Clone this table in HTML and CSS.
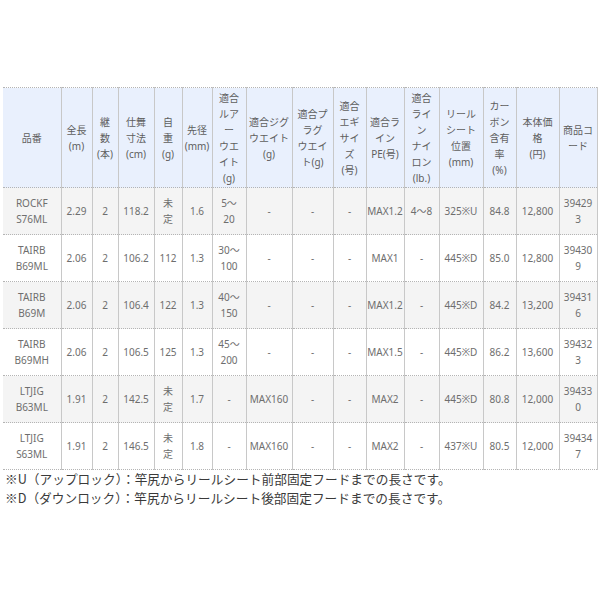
FILE: index.html
```html
<!DOCTYPE html>
<html lang="ja">
<head>
<meta charset="utf-8">
<title>Spec table</title>
<link rel="stylesheet" href="styles.css">
</head>
<body>
<div class="page">
  <table class="spec">
    <colgroup>
      <col class="c58"><col class="c31"><col class="c26"><col class="c36"><col class="c28"><col class="c30"><col class="c34"><col class="c46"><col class="c41"><col class="c33"><col class="c38"><col class="c35"><col class="c44"><col class="c33"><col class="c43"><col class="c38">
    </colgroup>
    <thead>
      <tr>
        <th>品番</th>
        <th>全長<br>(m)</th>
        <th>継<br>数<br>(本)</th>
        <th>仕舞<br>寸法<br>(cm)</th>
        <th>自<br>重<br>(g)</th>
        <th>先径<br>(mm)</th>
        <th>適合<br>ルア<br>ー<br>ウエ<br>イト<br>(g)</th>
        <th>適合ジグ<br>ウエイト<br>(g)</th>
        <th>適合プ<br>ラグ<br>ウエイ<br>ト(g)</th>
        <th>適合<br>エギ<br>サイ<br>ズ<br>(号)</th>
        <th>適合ラ<br>イン<br>PE(号)</th>
        <th>適合<br>ライ<br>ン<br>ナイ<br>ロン<br>(lb.)</th>
        <th>リール<br>シート<br>位置<br>(mm)</th>
        <th>カー<br>ボン<br>含有<br>率<br>(%)</th>
        <th>本体価<br>格<br>(円)</th>
        <th>商品コ<br>ード</th>
      </tr>
    </thead>
    <tbody>
      <tr>
        <td>ROCKF<br>S76ML</td><td>2.29</td><td>2</td><td>118.2</td><td>未<br>定</td><td>1.6</td><td>5～<br>20</td><td>-</td><td>-</td><td>-</td><td>MAX1.2</td><td>4～8</td><td>325※U</td><td>84.8</td><td>12,800</td><td>39429<br>3</td>
      </tr>
      <tr>
        <td>TAIRB<br>B69ML</td><td>2.06</td><td>2</td><td>106.2</td><td>112</td><td>1.3</td><td>30～<br>100</td><td>-</td><td>-</td><td>-</td><td>MAX1</td><td>-</td><td>445※D</td><td>85.0</td><td>12,800</td><td>39430<br>9</td>
      </tr>
      <tr>
        <td>TAIRB<br>B69M</td><td>2.06</td><td>2</td><td>106.4</td><td>122</td><td>1.3</td><td>40～<br>150</td><td>-</td><td>-</td><td>-</td><td>MAX1.2</td><td>-</td><td>445※D</td><td>84.2</td><td>13,200</td><td>39431<br>6</td>
      </tr>
      <tr>
        <td>TAIRB<br>B69MH</td><td>2.06</td><td>2</td><td>106.5</td><td>125</td><td>1.3</td><td>45～<br>200</td><td>-</td><td>-</td><td>-</td><td>MAX1.5</td><td>-</td><td>445※D</td><td>86.2</td><td>13,600</td><td>39432<br>3</td>
      </tr>
      <tr>
        <td>LTJIG<br>B63ML</td><td>1.91</td><td>2</td><td>142.5</td><td>未<br>定</td><td>1.7</td><td>-</td><td>MAX160</td><td>-</td><td>-</td><td>MAX2</td><td>-</td><td>445※D</td><td>80.8</td><td>12,000</td><td>39433<br>0</td>
      </tr>
      <tr>
        <td>LTJIG<br>S63ML</td><td>1.91</td><td>2</td><td>146.5</td><td>未<br>定</td><td>1.8</td><td>-</td><td>MAX160</td><td>-</td><td>-</td><td>MAX2</td><td>-</td><td>437※U</td><td>80.5</td><td>12,000</td><td>39434<br>7</td>
      </tr>
    </tbody>
  </table>
  <div class="notes">
    <p>※U（アップロック）：竿尻からリールシート前部固定フードまでの長さです。</p>
    <p>※D（ダウンロック）：竿尻からリールシート後部固定フードまでの長さです。</p>
  </div>
</div>
</body>
</html>
```

FILE: styles.css
```css
html, body {
  margin: 0;
  padding: 0;
  background: #ffffff;
}

.page {
  padding: 87px 3px 0 3px;
  font-family: "Noto Sans", "Noto Sans CJK JP", sans-serif;
}

.spec {
  width: 594px;
  table-layout: fixed;
  border-collapse: collapse;
  font-size: 10px;
  line-height: 16px;
  color: #6e6e6e;
  text-align: center;
}

.c58 { width: 58px; }
.c31 { width: 31px; }
.c26 { width: 26px; }
.c36 { width: 36px; }
.c28 { width: 28px; }
.c30 { width: 30px; }
.c34 { width: 34px; }
.c46 { width: 46px; }
.c41 { width: 41px; }
.c33 { width: 33px; }
.c38 { width: 38px; }
.c35 { width: 35px; }
.c44 { width: 44px; }
.c43 { width: 43px; }

.spec th,
.spec td {
  padding: 0;
  white-space: nowrap;
  vertical-align: middle;
  border-top: 1px dotted #b4b4b4;
  border-bottom: 1px dotted #b4b4b4;
  border-left: 1px solid #c8c8c8;
  border-right: 1px solid #c8c8c8;
}

.spec th:first-child,
.spec td:first-child {
  border-left: none;
}

.spec th {
  font-weight: normal;
  color: #5e5e5e;
  background: #e9f0fd;
  height: 99px;
}

.spec td {
  height: 46px;
}

.spec tbody tr:nth-child(odd) td {
  background: #f4f4f4;
}

.notes {
  padding: 0 0 0 2px;
  font-family: "Noto Sans CJK JP", sans-serif;
  font-size: 12.7px;
  line-height: 18.5px;
  color: #3a3a3a;
}

.notes p {
  margin: 0;
}
```
